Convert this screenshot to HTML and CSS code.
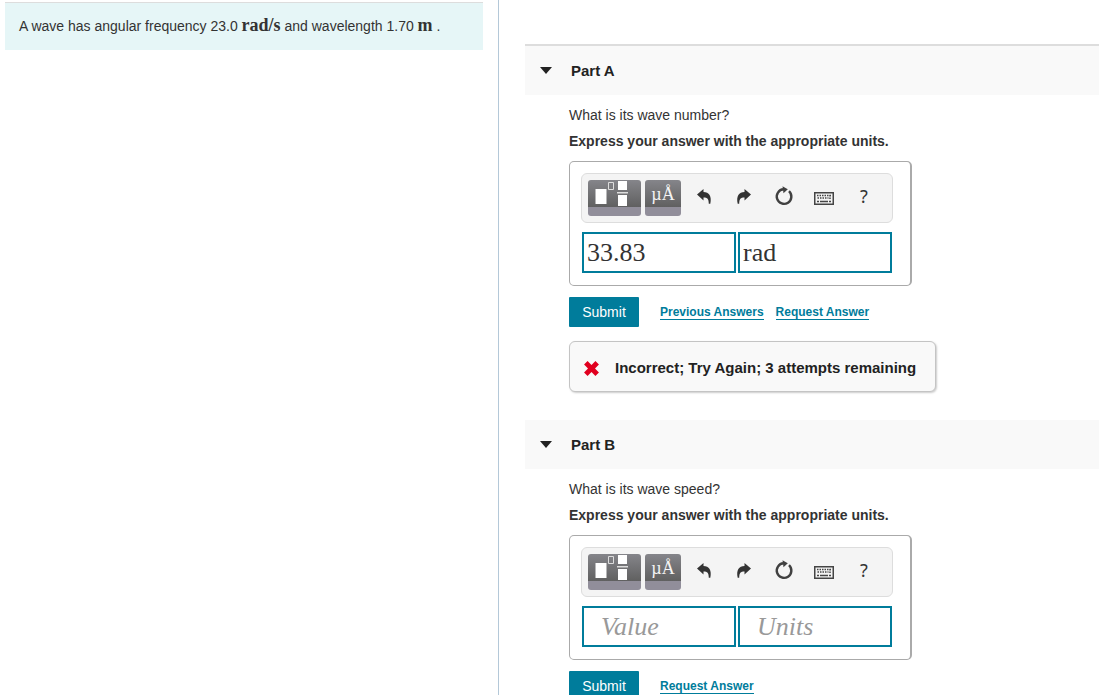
FILE: index.html
```html
<!DOCTYPE html>
<html lang="en">
<head>
<meta charset="utf-8">
<title>Wave problem</title>
<link rel="stylesheet" href="styles.css">
</head>
<body>
<svg class="sprite" aria-hidden="true">
  <symbol id="i-template" viewBox="0 0 53 36">
    <path d="M7.500 9h11v15h-11z" fill="#fff"/>
    <path d="M20.500 2.500h5v7h-5z" fill="none" stroke="#ddd"/>
    <path d="M30 1h9v9h-9zM30 15h9v11h-9z" fill="#fff"/>
    <path d="M29 12h11v1.500h-11z" fill="#ddd"/>
  </symbol>
  <symbol id="i-undo" viewBox="0 0 16 16">
    <path d="M1 6.500 7.500 1v3C13 4.200 16 8 14.300 15.800H12.800C12.800 11 11.500 9.500 7.500 9.500v3z" fill="#333"/>
  </symbol>
  <symbol id="i-redo" viewBox="0 0 16 16">
    <path d="M15 6.500 8.500 1v3C3 4.200 0 8 1.700 15.800H3.200C3.200 11 4.500 9.500 8.500 9.500v3z" fill="#333"/>
  </symbol>
  <symbol id="i-reset" viewBox="0 0 20 20">
    <path d="M15 5.200A7.300 7.300 0 1 1 9.500 3.300" fill="none" stroke="#404040" stroke-width="2.400"/>
    <path d="M8.500.2 13.800 3.200 9.500 7.200z" fill="#404040"/>
  </symbol>
  <symbol id="i-keyboard" viewBox="0 0 20 13">
    <path d="M.75.75h18.500v11.500h-18.500z" fill="#f4f4f4" stroke="#444" stroke-width="1.500"/>
    <path d="M3 3.500h14M3.500 6h11M16 3v4" fill="none" stroke="#444" stroke-width="1.500" stroke-dasharray="1.500 1"/>
    <path d="M3 9.500h2M6 9.500h8M15 9.500h2" stroke="#444" stroke-width="1.500"/>
  </symbol>
  <symbol id="i-cross" viewBox="0 0 16 16">
    <path d="M4.300 1 8 4.700 11.700 1 15 4.200 11.300 8 15 11.800 11.700 15 8 11.300 4.300 15 1 11.800 4.700 8 1 4.200z" fill="#e1001f"/>
  </symbol>
</svg>
<div class="page">
  <aside class="problem">
    <p class="prompt">A wave has angular frequency 23.0 <span class="unit">rad/s</span> and wavelength 1.70 <span class="unit">m</span> .</p>
  </aside>
  <main class="parts">
    <section class="part">
      <h2 class="part-head part-head-first"><button class="toggle" type="button"><span class="caret"></span>Part A</button></h2>
      <form class="part-body">
        <p class="question">What is its wave number?</p>
        <p class="instruction">Express your answer with the appropriate units.</p>
        <div class="answer">
          <div class="toolbar">
            <button class="key key-wide" type="button" aria-label="Templates"><svg class="key-art"><use href="#i-template"/></svg></button>
            <button class="key" type="button" aria-label="Units">µÅ</button>
            <button class="tool" type="button" aria-label="Undo"><svg width="16" height="16"><use href="#i-undo"/></svg></button>
            <button class="tool" type="button" aria-label="Redo"><svg width="16" height="16"><use href="#i-redo"/></svg></button>
            <button class="tool" type="button" aria-label="Reset"><svg width="20" height="20"><use href="#i-reset"/></svg></button>
            <button class="tool tool-keyboard" type="button" aria-label="Keyboard shortcuts"><svg width="20" height="13"><use href="#i-keyboard"/></svg></button>
            <button class="tool" type="button" aria-label="Help">?</button>
          </div>
          <div class="fields">
            <input class="field" type="text" aria-label="Value" placeholder="Value" value="33.83">
            <input class="field" type="text" aria-label="Units" placeholder="Units" value="rad">
          </div>
        </div>
        <div class="actions">
          <button class="submit" type="button">Submit</button>
          <a class="link" href="#previous">Previous Answers</a>
          <a class="link" href="#request-a">Request Answer</a>
        </div>
        <div class="feedback"><svg width="17" height="17"><use href="#i-cross"/></svg>Incorrect; Try Again; 3 attempts remaining</div>
      </form>
    </section>
    <section class="part">
      <h2 class="part-head"><button class="toggle" type="button"><span class="caret"></span>Part B</button></h2>
      <form class="part-body">
        <p class="question">What is its wave speed?</p>
        <p class="instruction">Express your answer with the appropriate units.</p>
        <div class="answer">
          <div class="toolbar">
            <button class="key key-wide" type="button" aria-label="Templates"><svg class="key-art"><use href="#i-template"/></svg></button>
            <button class="key" type="button" aria-label="Units">µÅ</button>
            <button class="tool" type="button" aria-label="Undo"><svg width="16" height="16"><use href="#i-undo"/></svg></button>
            <button class="tool" type="button" aria-label="Redo"><svg width="16" height="16"><use href="#i-redo"/></svg></button>
            <button class="tool" type="button" aria-label="Reset"><svg width="20" height="20"><use href="#i-reset"/></svg></button>
            <button class="tool tool-keyboard" type="button" aria-label="Keyboard shortcuts"><svg width="20" height="13"><use href="#i-keyboard"/></svg></button>
            <button class="tool" type="button" aria-label="Help">?</button>
          </div>
          <div class="fields">
            <input class="field" type="text" aria-label="Value" placeholder="Value">
            <input class="field" type="text" aria-label="Units" placeholder="Units">
          </div>
        </div>
        <div class="actions">
          <button class="submit" type="button">Submit</button>
          <a class="link" href="#request-b">Request Answer</a>
        </div>
      </form>
    </section>
  </main>
</div>
</body>
</html>
```
FILE: styles.css
```css
* { box-sizing: border-box; }
body {
  margin: 0;
  background: #fff;
  color: #333;
  font: 14px/20px "Liberation Sans", Arial, sans-serif;
}
p, h2 { margin: 0; }
button, input { font: inherit; color: inherit; margin: 0; }
svg { display: block; flex: none; }
.sprite { display: none; }

.page {
  display: grid;
  grid-template-columns: 499fr 600fr;
  height: 100vh;
  overflow: hidden;
}
.problem {
  padding: 2px 15px 0 5px;
  border-right: 1px solid #b4c8d8;
}
.prompt {
  padding: 12px 14px 14px;
  border-top: 1px solid #ddd;
  background: #e6f6f7;
}
.unit { font: bold 18px/20px "Liberation Serif", "Times New Roman", serif; }

.parts { padding: 44px 0 0 26px; }
.part-head { background: #f9f9f9; font-size: 15px; }
.part-head-first { border-top: 2px solid #ddd; }
.toggle {
  display: flex;
  align-items: center;
  gap: 19px;
  width: 100%;
  height: 49px;
  padding: 0 15px;
  border: 0;
  background: none;
  color: #222;
  font-weight: bold;
}
.caret {
  border: 6px solid transparent;
  border-top: 7px solid #222;
  border-bottom: 0;
}
.part-body { padding: 10px 16px 28px 44px; }
.question { margin-bottom: 6px; }
.instruction { margin-bottom: 10px; font-weight: bold; }

.answer {
  width: 343px;
  max-width: 100%;
  padding: 11px 17px 12px 11px;
  border: 1px solid #aaa;
  border-right-width: 2px;
  border-radius: 5px;
}
.toolbar {
  display: flex;
  align-items: center;
  height: 50px;
  padding: 0 6px;
  border: 1px solid #ddd;
  border-radius: 6px;
  background: #f4f4f4;
}
.key {
  width: 36px;
  height: 36px;
  margin-right: 3px;
  padding: 0 0 8px;
  border: 0;
  border-radius: 3px;
  background: linear-gradient(#85858a, #606060 27px, #918e9a 27px, #918e9a);
  color: #f4f4f4;
  font: 18px/26px "Liberation Serif", "Times New Roman", serif;
}
.key-wide { width: 53px; margin-right: 4px; padding: 0; }
.key-art { width: 53px; height: 36px; }
.tool {
  display: flex;
  align-items: center;
  justify-content: center;
  width: 40px;
  height: 40px;
  padding: 0 0 4px;
  border: 0;
  background: none;
  font: 18px/20px "Noto Sans", sans-serif;
}
.tool-keyboard { padding: 0; }
.fields {
  display: grid;
  grid-template-columns: 1fr 1fr;
  gap: 2px;
  margin: 9px 1px 0;
}
.field {
  width: 100%;
  height: 41px;
  padding: 0 3px;
  border: 2px solid #007c9b;
  border-radius: 0;
  background: #fff;
  font: 26px/36px "Liberation Serif", "Times New Roman", serif;
}
.field:placeholder-shown { padding: 0 17px; font-style: italic; }
.field::placeholder { color: #999; opacity: 1; }

.actions {
  display: flex;
  align-items: center;
  margin-top: 11px;
}
.submit {
  width: 70px;
  height: 30px;
  margin-right: 21px;
  padding: 0;
  border: 0;
  border-radius: 1px;
  background: #007c9b;
  color: #fff;
  font-size: 14px;
}
.link {
  margin-right: 12px;
  border-bottom: 1px solid #007c9b;
  color: #007c9b;
  font: bold 12px/14px "Liberation Sans", Arial, sans-serif;
  text-decoration: none;
}
.feedback {
  display: flex;
  align-items: center;
  gap: 15px;
  width: 367px;
  max-width: 100%;
  height: 51px;
  margin-top: 14px;
  padding: 3px 13px 0 13px;
  border: 1px solid #c4c4c4;
  border-radius: 6px;
  background: #f9f9f9;
  box-shadow: 1px 1px 2px #ccc;
  color: #222;
  font-size: 15px;
  font-weight: bold;
  white-space: nowrap;
}
```
